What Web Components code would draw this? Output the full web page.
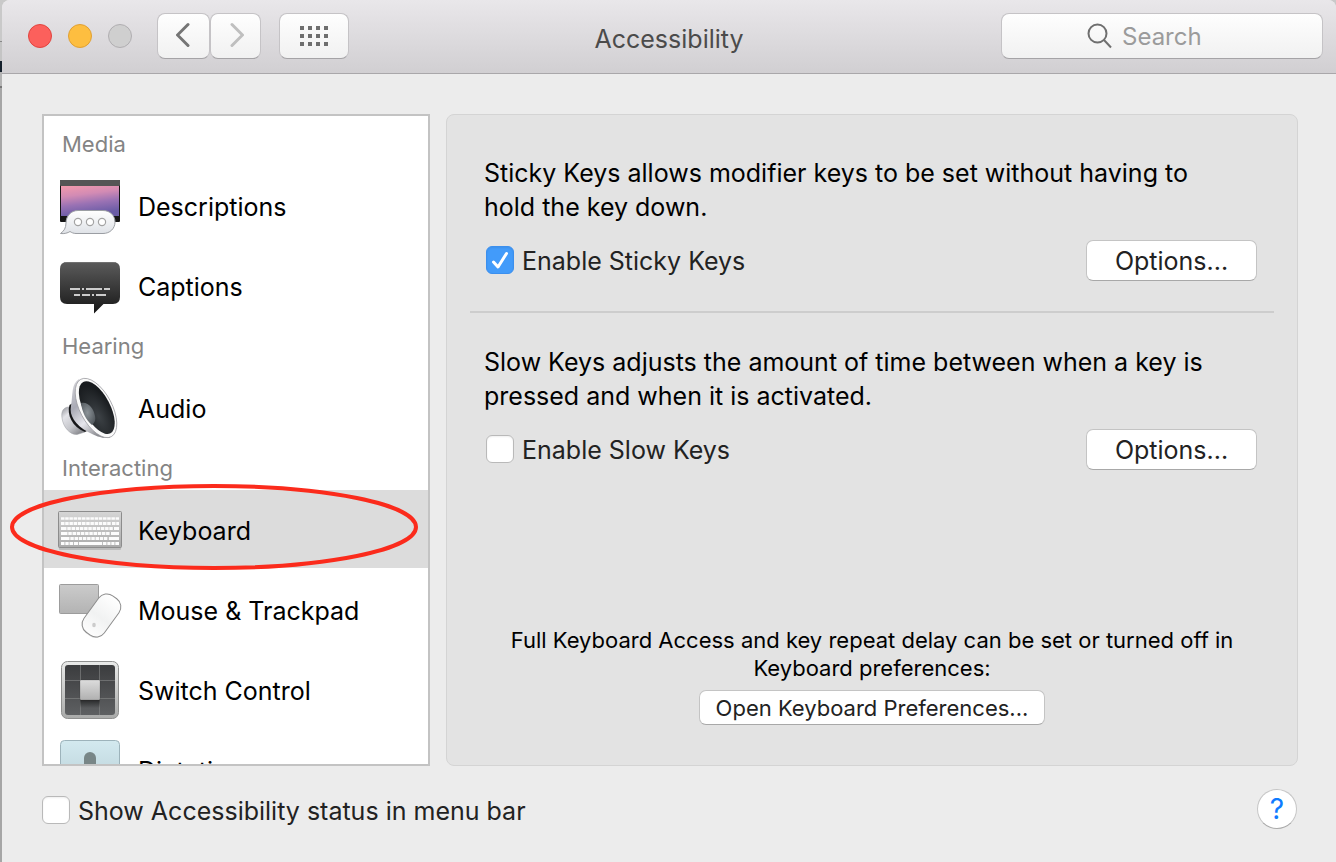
<!DOCTYPE html>
<html lang="en">
<head>
<meta charset="utf-8">
<title>Accessibility</title>
<style>
html { height: 100%; }
body {
  margin: 0; height: 100%; box-sizing: border-box; padding-left: 2px; overflow: hidden;
  font-family: Inter, "Liberation Sans", sans-serif; font-size: 25px; color: #000;
  background: linear-gradient(#c9c9c9 0 41px, #888 41px 42px, #c4c4c4 42px 61px, #15202c 61px 72px, #b4b4b4 72px 86px, #777 86px 88px, #a6a6a6 88px);
}
</style>
</head>
<body>
<prefs-window>
  <title-bar slot="bar">Accessibility</title-bar>
  <side-list slot="side">
    <list-heading>Media</list-heading>
    <list-row>
      <svg slot="icon" viewBox="0 0 64 64" aria-hidden="true">
        <defs>
          <linearGradient id="sky" x1="0" y1="0" x2=".25" y2="1"><stop offset="0" stop-color="#f39aac"/><stop offset=".35" stop-color="#d28bb4"/><stop offset=".65" stop-color="#9a72b4"/><stop offset="1" stop-color="#6a5ca6"/></linearGradient>
          <linearGradient id="bub" x1="0" y1="0" x2="0" y2="1"><stop offset="0" stop-color="#fff"/><stop offset="1" stop-color="#dfe2e7"/></linearGradient>
        </defs>
        <rect x="2" y="7" width="60" height="42" rx="1" fill="#161616"/>
        <rect x="2" y="7" width="60" height="6" rx="1" fill="#555"/>
        <rect x="3" y="13" width="58" height="30" fill="url(#sky)"/>
        <path d="M20 37.500H45C52 37.500 57 42.500 57 49S52 60.500 45 60.500H18C15.500 60.500 13.500 59.500 12 58.500 10 60 6 61 2.500 60.500 6 58 8 55 8 50 8 43 13 37.500 20 37.500Z" fill="url(#bub)" stroke="#9b9ea3"/>
        <g fill="#fff" stroke="#a3a3a3" stroke-width="1.200"><circle cx="20" cy="49" r="3.600"/><circle cx="32" cy="49" r="3.600"/><circle cx="44" cy="49" r="3.600"/></g>
      </svg>Descriptions</list-row>
    <list-row>
      <svg slot="icon" viewBox="0 0 64 64" aria-hidden="true">
        <defs><linearGradient id="cap" x1="0" y1="0" x2="0" y2="1"><stop offset="0" stop-color="#5b5b5b"/><stop offset="1" stop-color="#171717"/></linearGradient></defs>
        <path d="M9 9H55Q62 9 62 16V44Q62 51 55 51H45.500L36 60.500V51H9Q2 51 2 44V16Q2 9 9 9Z" fill="url(#cap)"/>
        <path d="M6 9.500H58" stroke="#777" stroke-width=".8"/>
        <path d="M12 36H22M24 36H26M28 36H44M46 36H52M16 42H22M24 42H32M34 42H36M38 42H48" stroke="#ccc" stroke-width="2"/>
      </svg>Captions</list-row>
    <list-heading>Hearing</list-heading>
    <list-row>
      <svg slot="icon" viewBox="0 0 64 64" aria-hidden="true">
        <defs>
          <linearGradient id="mag" x1="0" y1="0" x2=".7" y2="1"><stop offset="0" stop-color="#8f9096"/><stop offset=".3" stop-color="#e4e4e9"/><stop offset=".7" stop-color="#c4c5ca"/><stop offset="1" stop-color="#8a8b90"/></linearGradient>
          <linearGradient id="horn" x1="0" y1="0" x2=".6" y2="1"><stop offset="0" stop-color="#dcdce0"/><stop offset=".4" stop-color="#a9aab5"/><stop offset=".7" stop-color="#e6e6ec"/><stop offset="1" stop-color="#8c8d92"/></linearGradient>
          <radialGradient id="cone" cx=".4" cy=".65" r=".6"><stop offset="0" stop-color="#3d4246"/><stop offset="1" stop-color="#181b1e"/></radialGradient>
          <radialGradient id="dome" cx=".45" cy=".45" r=".6"><stop offset="0" stop-color="#8c9398"/><stop offset="1" stop-color="#555b60"/></radialGradient>
        </defs>
        <path d="M11 32C5 32 3 37 4 43 5 52 12 60 19 59.500L27 57 16 34Z" fill="url(#mag)" stroke="#999aa0" stroke-width=".5"/>
        <path d="M11.500 30C8.500 39 14 52 27 57L31 55 15 28Z" fill="#161719"/>
        <path d="M21 4C13 9 15 20 13 31 11 40 17 50 30 57 38 61 43 63.500 52 63L48 40Z" fill="url(#horn)"/>
        <ellipse cx="38" cy="33" rx="16" ry="32.500" transform="rotate(-28 38 33)" fill="#fafafa" stroke="#99999d" stroke-width=".7"/>
        <ellipse cx="38.800" cy="32.600" rx="13.200" ry="29" transform="rotate(-28 38.800 32.600)" fill="url(#cone)"/>
        <path d="M23 28C30 26 36 34 37 41 38 45 36.500 48 34 50 28 45 24 37 23 28Z" fill="url(#dome)"/>
      </svg>Audio</list-row>
    <list-heading>Interacting</list-heading>
    <list-row selected>
      <svg slot="icon" viewBox="0 0 64 64" aria-hidden="true">
        <defs><linearGradient id="alu" x1="0" y1="0" x2="0" y2="1"><stop offset="0" stop-color="#d6d6d6"/><stop offset="1" stop-color="#aaa"/></linearGradient></defs>
        <rect x="1" y="50" width="62" height="3" rx="1" fill="#000" opacity=".15"/>
        <rect x=".5" y="14.500" width="63" height="36" rx="1" fill="url(#alu)" stroke="#8c8c8c"/>
        <g stroke="#fcfcfc" fill="none" stroke-width="3">
          <path d="M3 21.500H61" stroke-width="2.400" stroke-dasharray="3.500 .7"/>
          <path d="M3 26.500H53M54 26.500H61" stroke-dasharray="3.500 .7"/>
          <path d="M3 31.500H8.500M56 31.500H61"/><path d="M9.300 31.500H55.300" stroke-dasharray="3.500 .7"/>
          <path d="M3 36.500H9.500M53 36.500H61"/><path d="M10.300 36.500H52.300" stroke-dasharray="3.500 .7"/>
          <path d="M3 41.500H11.500M51 41.500H61"/><path d="M12.300 41.500H50.300" stroke-dasharray="3.500 .7"/>
          <path d="M3 46.500H6.500M7.300 46.500H10.700M11.500 46.500H15M15.800 46.500H20M20.800 46.500H44M44.800 46.500H48.500M49.300 46.500H52.500M53.300 46.500H56.500M57.300 46.500H61"/>
        </g>
      </svg>Keyboard</list-row>
    <list-row>
      <svg slot="icon" viewBox="0 0 64 64" aria-hidden="true">
        <defs>
          <linearGradient id="pad" x1="0" y1="0" x2="0" y2="1"><stop offset="0" stop-color="#cbcbcb"/><stop offset="1" stop-color="#b3b3b3"/></linearGradient>
          <linearGradient id="mouse" x1="0" y1="0" x2="0" y2="1"><stop offset="0" stop-color="#fff"/><stop offset=".55" stop-color="#f1f2f2"/><stop offset="1" stop-color="#fdfdfd"/></linearGradient>
        </defs>
        <rect x="1.500" y="7.500" width="39" height="29" rx="1" fill="url(#pad)" stroke="#9c9c9c"/>
        <g transform="rotate(36 43.500 38.500)">
          <rect x="31" y="17" width="25" height="45" rx="10" fill="#000" opacity=".12"/>
          <rect x="31" y="16" width="25" height="45" rx="10" fill="url(#mouse)" stroke="#8d8d8d"/>
        </g>
        <ellipse cx="36" cy="48" rx="1.800" ry="2.200" fill="#ccc"/>
      </svg>Mouse &amp; Trackpad</list-row>
    <list-row>
      <svg slot="icon" viewBox="0 0 64 64" aria-hidden="true">
        <defs>
          <linearGradient id="frame" x1="0" y1="0" x2="0" y2="1"><stop offset="0" stop-color="#e9eae9"/><stop offset="1" stop-color="#a9aaa9"/></linearGradient>
          <linearGradient id="floor" x1="0" y1="0" x2="0" y2="1"><stop offset="0" stop-color="#3b3c3e"/><stop offset="1" stop-color="#5e6062"/></linearGradient>
          <linearGradient id="knob" x1="0" y1="0" x2="0" y2="1"><stop offset="0" stop-color="#dcdcdc"/><stop offset="1" stop-color="#b0b0b0"/></linearGradient>
          <linearGradient id="drop" x1="0" y1="0" x2="0" y2="1"><stop offset="0" stop-color="#000" stop-opacity=".7"/><stop offset="1" stop-color="#000" stop-opacity="0"/></linearGradient>
        </defs>
        <rect x="3.500" y="4.500" width="57" height="57" rx="6" fill="url(#frame)" stroke="#8f908f"/>
        <rect x="7" y="8" width="50" height="50" rx="3" fill="url(#floor)"/>
        <path d="M22.500 8V58M41.500 8V58M7 23.500H57M7 41.500H57" stroke="#88898a" stroke-width=".6"/>
        <rect x="22" y="40" width="20" height="11" fill="url(#drop)"/>
        <rect x="22" y="23" width="20" height="20" rx="1" fill="url(#knob)" stroke="#222" stroke-opacity=".3" stroke-width=".6"/>
      </svg>Switch Control</list-row>
    <list-row>
      <svg slot="icon" viewBox="0 0 64 64" aria-hidden="true">
        <defs><linearGradient id="dic" x1="0" y1="0" x2="0" y2="1"><stop offset="0" stop-color="#d3e9ef"/><stop offset="1" stop-color="#b4ccd4"/></linearGradient></defs>
        <rect x="2.500" y="3.500" width="59" height="58" rx="4" fill="url(#dic)" stroke="#9db3bb"/>
        <rect x="26" y="15" width="12" height="26" rx="6" fill="#788687"/>
      </svg>Dictation</list-row>
  </side-list>
  <detail-panel slot="main">
    <key-option checked>
      <span slot="text">Sticky Keys allows modifier keys to be set without having to hold the key down.</span>
      <span slot="label">Enable Sticky Keys</span>
    </key-option>
    <key-option>
      <span slot="text">Slow Keys adjusts the amount of time between when a key is pressed and when it is activated.</span>
      <span slot="label">Enable Slow Keys</span>
    </key-option>
    <span slot="note">Full Keyboard Access and key repeat delay can be set or turned off in Keyboard preferences:</span>
    <push-button slot="note-action" small>Open Keyboard Preferences...</push-button>
  </detail-panel>
  <check-field slot="foot">Show Accessibility status in menu bar</check-field>
  <help-button slot="foot"></help-button>
</prefs-window>

<script>
const define = (name, html, setup) => {
  const template = document.createElement('template');
  template.innerHTML = html;
  customElements.define(name, class extends HTMLElement {
    constructor() {
      super();
      this.attachShadow({ mode: 'open' }).append(template.content.cloneNode(true));
    }
    connectedCallback() { if (setup) setup(this, this.shadowRoot); }
  });
};

define('prefs-window', `
<style>
  :host { display: flex; flex-direction: column; height: 100%; background: #ececec; border-radius: 8px 8px 0 0; overflow: hidden; }
  main { flex: 1; min-height: 0; display: grid; grid-template-columns: 388px minmax(0, 1fr); gap: 16px; padding: 40px 38px 0 40px; }
  footer { display: flex; align-items: center; justify-content: space-between; padding: 0 39px 10px 40px; height: 86px; }
  ::slotted(check-field) { padding-top: 4px; }
</style>
<slot name="bar"></slot>
<main><slot name="side"></slot><slot name="main"></slot></main>
<footer><slot name="foot"></slot></footer>`);

define('title-bar', `
<style>
  :host { display: block; background: linear-gradient(#e9e7ea, #d1cfd2); border-bottom: 1px solid #a9a7aa; color: #4b4b4b; }
  header { display: grid; grid-template-columns: 1fr auto 1fr; align-items: center; height: 73px; padding: 0 13px 2px; box-sizing: border-box; }
  .left { display: flex; align-items: center; padding-left: 13px; }
  .lights { display: flex; gap: 16px; margin-right: 25px; }
  .lights button { width: 24px; height: 24px; padding: 0; border-radius: 50%; border: 1px solid #e1443f; background: #fc605c; }
  .lights button:nth-child(2) { border-color: #e0a033; background: #fdbe40; }
  .lights button:nth-child(3) { border-color: #b0aeb1; background: #cfcfcf; }
  h1 { margin: 0; font: inherit; line-height: 32px; padding-top: 6px; }
</style>
<header>
  <div class="left">
    <div class="lights"><button aria-label="Close"></button><button aria-label="Minimize"></button><button aria-label="Zoom" disabled></button></div>
    <tool-button kind="back"></tool-button><tool-button kind="forward"></tool-button><tool-button kind="grid"></tool-button>
  </div>
  <h1><slot></slot></h1>
  <search-field></search-field>
</header>`);

const dots = [0, 1, 2].map(r => [0, 1, 2, 3].map(c => `<rect x="${c * 8}" y="${r * 8}" width="4" height="4"/>`).join('')).join('');
const toolIcons = {
  back: ['Back', '<svg width="16" height="26" viewBox="0 0 16 26"><path d="M12 2.500L1.500 13 12 23.500" fill="none" stroke="#757575" stroke-width="3" stroke-linecap="round"/></svg>'],
  forward: ['Forward', '<svg width="16" height="26" viewBox="0 0 16 26"><path d="M4 2.500L14.500 13 4 23.500" fill="none" stroke="#bfbfbf" stroke-width="3" stroke-linecap="round"/></svg>'],
  grid: ['Show All', `<svg width="28" height="20" viewBox="0 0 28 20" fill="#6e6e6e">${dots}</svg>`]
};
define('tool-button', `
<style>
  :host { display: block; width: 53px; }
  :host([kind=forward]) { width: 51px; }
  :host([kind=grid]) { width: 70px; margin-left: 18px; }
  button { display: flex; align-items: center; justify-content: center; width: 100%; height: 46px; padding: 0 0 2px; border: 1px solid #c5c3c6; border-bottom-color: #a5a3a6; border-radius: 8px; background: linear-gradient(#fefefe, #f1f1f1); }
  :host([kind=grid]) button { padding: 0; }
</style>
<button></button>`, (host, root) => {
  const [name, icon] = toolIcons[host.getAttribute('kind')];
  const button = root.querySelector('button');
  button.setAttribute('aria-label', name);
  button.innerHTML = icon;
});

define('search-field', `
<style>
  :host { display: block; justify-self: end; width: 322px; }
  label { display: flex; align-items: center; gap: 9px; box-sizing: border-box; height: 46px; padding: 0 12px 0 85px; border: 1px solid #c5c3c6; border-bottom-color: #a5a3a6; border-radius: 8px; background: linear-gradient(#fefefe, #f1f1f1); }
  svg { flex: none; }
  input { flex: 1; min-width: 0; border: 0; padding: 2px 0 0; margin: 0; background: none; outline: 0; font: inherit; font-size: 24px; line-height: 32px; color: #333; appearance: none; }
  input::placeholder { color: #9b9b9b; opacity: 1; }
</style>
<label>
  <svg width="26" height="26" viewBox="0 0 26 26" fill="none" stroke="#6f6f6f" stroke-width="2"><circle cx="10.500" cy="10.500" r="9"/><path d="M17 17L24 24.500"/></svg>
  <input type="search" placeholder="Search" aria-label="Search">
</label>`);

define('side-list', `
<style>
  :host { display: block; position: relative; min-height: 0; }
  nav { box-sizing: border-box; height: 100%; overflow: hidden; border: 2px solid #c3c3c3; background: #fff; padding-top: 8px; }
  .mark { position: absolute; left: -33px; top: 369px; width: 410px; height: 88px; pointer-events: none; }
</style>
<nav aria-label="Accessibility categories"><slot></slot></nav>
<svg class="mark" viewBox="0 0 410 88" aria-hidden="true"><ellipse cx="205" cy="44" rx="202" ry="41" fill="none" stroke="#fb2b1c" stroke-width="4"/></svg>`);

define('list-heading', `
<style>
  :host { display: block; height: 42px; }
  h2 { margin: 0; padding-left: 18px; font-size: 22px; font-weight: 400; line-height: 40px; color: #848484; }
</style>
<h2><slot></slot></h2>`);

define('list-row', `
<style>
  :host { display: block; margin-bottom: 2px; }
  button { display: flex; align-items: center; gap: 16px; width: 100%; height: 78px; padding: 0 14px; border: 0; background: none; font: inherit; color: #000; text-align: left; }
  :host([selected]) button { background: #dcdcdc; }
  ::slotted(svg) { width: 64px; height: 64px; flex: none; }
  .name { line-height: 32px; padding-top: 4px; }
</style>
<button><slot name="icon"></slot><span class="name"><slot></slot></span></button>`, (host, root) => {
  if (host.hasAttribute('selected')) root.querySelector('button').setAttribute('aria-current', 'true');
});

define('detail-panel', `
<style>
  :host { display: flex; flex-direction: column; box-sizing: border-box; padding: 41px 23px 40px; border: 1px solid #d4d4d4; border-radius: 8px; background: #e3e3e3; }
  .note { margin-top: auto; display: flex; flex-direction: column; align-items: center; gap: 8px; text-align: center; }
  p { margin: 0; padding: 0 30px; font-size: 22px; line-height: 28px; }
</style>
<slot></slot>
<div class="note"><p><slot name="note"></slot></p><slot name="note-action"></slot></div>`);

define('key-option', `
<style>
  :host { display: block; padding: 0 17px 30px 14px; }
  :host([checked]) { border-bottom: 2px solid #cdcdcd; margin-bottom: 32px; }
  p { margin: 0; padding-right: 20px; line-height: 34px; }
  .controls { display: flex; align-items: center; justify-content: space-between; padding: 16px 0 0 2px; }
</style>
<p><slot name="text"></slot></p>
<div class="controls"><check-field><slot name="label"></slot></check-field><push-button>Options...</push-button></div>`, (host, root) => {
  if (host.hasAttribute('checked')) root.querySelector('check-field').setAttribute('checked', '');
});

define('check-field', `
<style>
  :host { display: block; color: #222; }
  label { display: flex; align-items: center; gap: 8px; line-height: 32px; }
  .box { display: grid; flex: none; margin-bottom: 2px; }
  input, svg { grid-area: 1 / 1; }
  input { appearance: none; width: 28px; height: 28px; margin: 0; border: 1px solid #b9b9b9; border-radius: 6px; background: #fff; box-shadow: inset 0 1px 2px #0001; }
  input:checked { background: #429bfa; border-color: #3b8fee; }
  svg { display: none; pointer-events: none; }
  input:checked + svg { display: block; }
</style>
<label><span class="box"><input type="checkbox"><svg width="28" height="28" viewBox="0 0 28 28" aria-hidden="true"><path d="M7.500 16L12 21 20.500 7.500" fill="none" stroke="#fff" stroke-width="3" stroke-linecap="round" stroke-linejoin="round"/></svg></span><span><slot></slot></span></label>`, (host, root) => {
  root.querySelector('input').checked = host.hasAttribute('checked');
});
customElements.whenDefined('check-field').then(() => {
  document.querySelectorAll('key-option[checked]').forEach(option => {
    option.shadowRoot.querySelector('check-field').shadowRoot.querySelector('input').checked = true;
  });
});

define('push-button', `
<style>
  :host { display: block; }
  button { display: block; min-width: 171px; height: 41px; padding: 0 14px; border: 1px solid #c4c4c4; border-bottom-color: #a8a8a8; border-radius: 7px; background: #fff; font: inherit; line-height: 32px; color: #222; }
  :host([small]) button { height: 35px; min-width: 346px; font-size: 22px; line-height: 28px; }
</style>
<button><slot></slot></button>`);

define('help-button', `
<style>
  :host { display: block; }
  button { width: 40px; height: 40px; padding: 0; border: 1px solid #c6c6c6; border-bottom-color: #aaa; border-radius: 50%; background: #fff; font: inherit; font-size: 28px; line-height: 36px; color: #0f7bff; }
</style>
<button aria-label="Help">?</button>`);
</script>
</body>
</html>
